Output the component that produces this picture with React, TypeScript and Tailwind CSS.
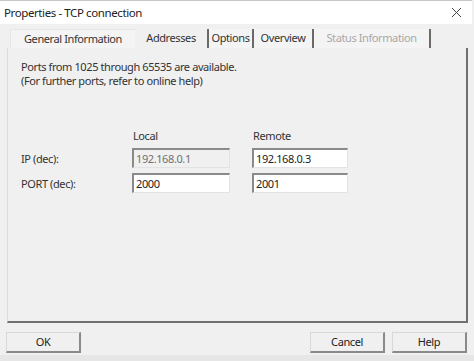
import React from 'react';

const font = { fontFamily: '"Noto Sans", "Liberation Sans", sans-serif' };

const tabs = [
  { label: 'General Information', w: 'w-[125px]' },
  { label: 'Addresses', w: 'w-[74px]', active: true },
  { label: 'Options', w: 'w-[45px]' },
  { label: 'Overview', w: 'w-[60px]' },
  { label: 'Status Information', w: 'w-[117px]', disabled: true },
];

const Field: React.FC<{ value: string; readOnly?: boolean; w: string }> = ({ value, readOnly, w }) => (
  <div
    className={`${w} h-[20px] flex items-center pl-[2px] border-t-2 border-l-2 border-t-[#8a8a8a] border-l-[#8a8a8a] border-b border-r border-b-[#e3e3e3] border-r-[#e3e3e3] ${
      readOnly ? 'bg-[#f0f0f0] text-[#707070]' : 'bg-white text-[#222]'
    }`}
  >
    {value}
  </div>
);

const Btn: React.FC<{ label: string }> = ({ label }) => (
  <button className="w-[75px] h-[21px] bg-[#f0f0f0] border border-[#d8d8d8] border-r-2 border-b-2 border-r-[#8a8a8a] border-b-[#8a8a8a] text-[11px] text-[#222] flex items-center justify-center">
    {label}
  </button>
);

export default function App() {
  return (
    <div
      className="w-[474px] h-[361px] bg-[#f0f0f0] overflow-hidden text-[11px] tracking-[-0.4px] text-[#333] flex flex-col"
      style={font}
    >
      {/* Title bar */}
      <div className="h-[24px] bg-white flex items-center justify-between pl-[4px] pr-[10px] border-t border-[#c8c8c8] mr-[2px]">
        <span className="text-[11.5px] text-[#222]">Properties - TCP connection</span>
        <svg width="11" height="11" viewBox="0 0 11 11" className="text-[#444]">
          <path d="M1 1 L10 10 M10 1 L1 10" stroke="currentColor" strokeWidth="1" />
        </svg>
      </div>

      {/* Tabs */}
      <div className="flex items-end pl-[10px] h-[24px] bg-[#f0f0f0]">
        {tabs.map((t) => (
          <div
            key={t.label}
            className={`${t.w} h-[19px] flex items-center justify-center ${
              t.active ? 'bg-[#f0f0f0]' : 'bg-[#f4f4f4]'
            } ${t.disabled ? 'text-[#a8a8a8]' : 'text-[#333]'} ${
              t.label === 'General Information'
                ? 'border-t border-l border-[#e6e6e6]'
                : 'border-r-2 border-r-[#6a6a6a]'
            }`}
          >
            {t.label}
          </div>
        ))}
      </div>

      {/* Panel */}
      <div className="ml-[7px] w-[461px] h-[275px] border-l border-l-[#dcdcdc] border-r-2 border-b-2 border-r-[#707070] border-b-[#707070] pl-[13px] pt-[12px] leading-[14px]">
        <div>Ports from 1025 through 65535 are available.</div>
        <div>(For further ports, refer to online help)</div>

        <div className="grid grid-cols-[111px_120px_96px] mt-[41px] items-center leading-[13px]">
          <div />
          <div className="h-[13px] pl-[1px]">Local</div>
          <div className="h-[13px] pl-[1px]">Remote</div>

          <div className="mt-[6px]">IP (dec):</div>
          <div className="mt-[6px]"><Field value="192.168.0.1" readOnly w="w-[98px]" /></div>
          <div className="mt-[6px]"><Field value="192.168.0.3" w="w-[96px]" /></div>

          <div className="mt-[5px]">PORT (dec):</div>
          <div className="mt-[5px]"><Field value="2000" w="w-[98px]" /></div>
          <div className="mt-[5px]"><Field value="2001" w="w-[96px]" /></div>
        </div>
      </div>

      {/* Buttons */}
      <div className="flex items-center mt-[9px] pl-[6px] pr-[7px]">
        <Btn label="OK" />
        <div className="flex-1" />
        <div className="flex gap-[7px]">
          <Btn label="Cancel" />
          <Btn label="Help" />
        </div>
      </div>

      <div className="flex-1 mt-[2px] bg-[#e6e6e6]" />
    </div>
  );
}
